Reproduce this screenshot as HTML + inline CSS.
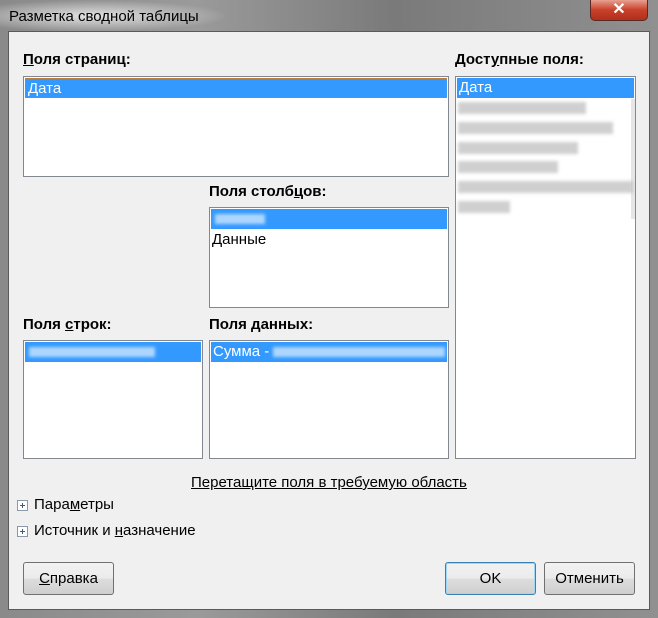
<!DOCTYPE html>
<html><head><meta charset="utf-8"><style>
*{margin:0;padding:0;box-sizing:border-box}
body{width:658px;height:618px;overflow:hidden;font-family:"Liberation Sans","Noto Sans CJK SC",sans-serif;font-size:15px;background:#fff}
.win{position:absolute;left:0;top:0;width:658px;height:618px;background:linear-gradient(90deg,#8a8a8a,#9a9a9a 30%,#7a7a7a 60%,#909090);}
.glow{position:absolute;left:0;top:0;width:230px;height:32px;background:radial-gradient(ellipse at 40% 50%,rgba(235,235,235,.9),rgba(235,235,235,0) 70%)}
.title{position:absolute;left:9px;top:8px;font-size:15px;color:#000}
.close{position:absolute;left:590px;top:0;width:58px;height:21px;border:1px solid #5a2a22;border-top:none;border-radius:0 0 5px 5px;background:linear-gradient(#e8a090,#c8402a 50%,#b0301c);color:#fff;font-weight:bold;text-align:center;font-size:16px;line-height:19px}
.client{position:absolute;left:8px;top:31px;width:642px;height:579px;background:#f0f0f0;border:1px solid #5a5a5a}
.abs{position:absolute}
.lbl{position:absolute;font-weight:bold;font-size:15px}
.box{position:absolute;background:#fff;border:1px solid #828790}
.sel{position:absolute;left:1px;right:1px;height:20px;background:#3399ff;color:#fff;padding-left:2px;line-height:20px;border:1px dotted #c08040}
.item{position:absolute;left:2px;line-height:20px}
.blur{position:absolute;height:12px;background:#b0b0b0;filter:blur(1.5px);opacity:.6}
.bl{position:absolute;height:10px;background:#fff;filter:blur(1.5px);opacity:.6}
.btn{position:absolute;height:33px;border:1px solid #707070;border-radius:3px;background:linear-gradient(#f2f2f2,#ebebeb 50%,#dddddd 51%,#cfcfcf);text-align:center;line-height:31px;font-size:15px}
.plus{position:absolute;width:11px;height:11px;border:1px solid #8a98a8;background:#fff}
.plus:before{content:"";position:absolute;left:2px;top:4px;width:5px;height:1px;background:#3a5a8a}
.plus:after{content:"";position:absolute;left:4px;top:2px;width:1px;height:5px;background:#3a5a8a}
u{text-decoration:underline}
</style></head><body>
<div class="win">
<div class="glow"></div>
<div class="title">Разметка сводной таблицы</div>
<div class="close">✕</div>
<div class="client"></div>

<div class="lbl" style="left:23px;top:51px"><u>П</u>оля страниц:</div>
<div class="box" style="left:23px;top:76px;width:426px;height:101px"><div class="sel" style="top:1px">Дата</div></div>

<div class="lbl" style="left:455px;top:51px">Дост<u>у</u>пные поля:</div>
<div class="box" style="left:455px;top:76px;width:181px;height:383px">
<div class="sel" style="top:1px;border:none">Дата</div>
<div class="abs" style="left:175px;top:22px;width:4px;height:120px;background:#e6e6e6"></div>
<div class="blur" style="left:2px;top:25px;width:128px"></div>
<div class="blur" style="left:2px;top:45px;width:155px"></div>
<div class="blur" style="left:2px;top:65px;width:120px"></div>
<div class="blur" style="left:2px;top:84px;width:100px"></div>
<div class="blur" style="left:2px;top:104px;width:175px"></div>
<div class="blur" style="left:2px;top:124px;width:52px"></div>
</div>

<div class="lbl" style="left:209px;top:183px">Поля столб<u>ц</u>ов:</div>
<div class="box" style="left:209px;top:207px;width:240px;height:101px">
<div class="sel" style="top:1px;border:none"><div class="bl" style="left:4px;top:5px;width:50px"></div></div>
<div class="item" style="top:22px">Данные</div>
</div>

<div class="lbl" style="left:23px;top:316px">Поля <u>с</u>трок:</div>
<div class="box" style="left:23px;top:340px;width:180px;height:119px">
<div class="sel" style="top:1px;border:none"><div class="bl" style="left:4px;top:5px;width:126px"></div></div>
</div>

<div class="lbl" style="left:209px;top:316px">Поля <u>д</u>анных:</div>
<div class="box" style="left:209px;top:340px;width:240px;height:119px">
<div class="sel" style="top:1px;border:none">Сумма - <div class="bl" style="left:62px;top:5px;width:172px"></div></div>
</div>

<div class="abs" style="left:191px;top:474px;text-decoration:underline">Перетащите поля в требуемую область</div>
<div class="plus" style="left:17px;top:500px"></div>
<div class="abs" style="left:34px;top:496px">Пара<u>м</u>етры</div>
<div class="plus" style="left:17px;top:526px"></div>
<div class="abs" style="left:34px;top:522px">Источник и <u>н</u>азначение</div>

<div class="btn" style="left:23px;top:562px;width:91px"><u>С</u>правка</div>
<div class="btn" style="left:445px;top:562px;width:91px;border-color:#3c7fb1;box-shadow:inset 0 0 0 1px #9fd5f5">OK</div>
<div class="btn" style="left:544px;top:562px;width:91px">Отменить</div>
</div>
</body></html>
